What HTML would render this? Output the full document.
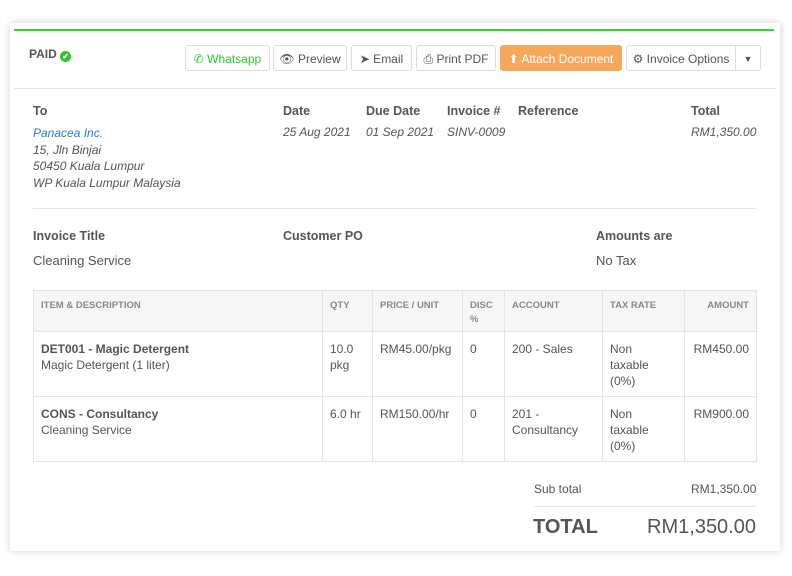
<!DOCTYPE html>
<html><head><style>
body{margin:0;width:792px;height:576px;background:#fff;font-family:"Liberation Sans",sans-serif;color:#555;position:relative;overflow:hidden}
.card{position:absolute;left:10px;top:23px;width:770px;height:528px;background:#fff;box-shadow:0 0 8px rgba(0,0,0,.18)}
.a{position:absolute;white-space:nowrap}
.btn{position:absolute;top:45px;height:26px;border:1px solid #ddd;border-radius:3px;background:#fff;font-size:12px;line-height:26px;text-align:center;color:#555;box-sizing:border-box}
.b{font-weight:bold;font-size:12.5px;color:#555}
.i{font-style:italic;font-size:12px;color:#555}
table{position:absolute;left:33px;top:290px;width:723px;border-collapse:collapse;table-layout:fixed;font-size:12px;color:#555}
td,th{border:1px solid #e3e3e3;vertical-align:top;padding:0 7px;text-align:left;line-height:16px;overflow:hidden}
th{background:#f6f6f6;font-size:9.5px;color:#888;font-weight:bold;height:41px;padding-top:8px;box-sizing:border-box;line-height:14px}
td{padding-top:9px;height:65px;box-sizing:border-box}
</style></head><body>
<div class="card"></div>
<div class="a" style="left:14px;top:29px;width:760px;height:2px;background:#3ccf3c"></div>
<div class="a" style="left:14px;top:88px;width:762px;height:1px;background:#e5e5e5"></div>
<div class="a b" style="left:29px;top:47px;font-size:12px">PAID <span style="display:inline-block;width:11px;height:11px;border-radius:50%;background:#2ec52e;color:#fff;font-size:8px;line-height:11px;text-align:center;vertical-align:-1px">✔</span></div>
<div class="btn" style="left:185px;width:85px;color:#2ec52e">✆ Whatsapp</div>
<div class="btn" style="left:273px;width:74px">👁 Preview</div>
<div class="btn" style="left:351px;width:61px">➤ Email</div>
<div class="btn" style="left:416px;width:80px">⎙ Print PDF</div>
<div class="btn" style="left:500px;width:122px;background:#f6a85a;border-color:#f6a85a;color:#fff">⬆ Attach Document</div>
<div class="btn" style="left:626px;width:110px;border-radius:3px 0 0 3px">⚙ Invoice Options</div>
<div class="btn" style="left:735px;width:26px;border-radius:0 3px 3px 0;font-size:9px">▼</div>

<div class="a b" style="left:33px;top:104px">To</div>
<div class="a b" style="left:283px;top:104px">Date</div>
<div class="a b" style="left:366px;top:104px">Due Date</div>
<div class="a b" style="left:447px;top:104px">Invoice #</div>
<div class="a b" style="left:518px;top:104px">Reference</div>
<div class="a b" style="left:691px;top:104px">Total</div>
<div class="a i" style="left:33px;top:125px;line-height:16.5px"><span style="color:#2a7bd0">Panacea Inc.</span><br>15, Jln Binjai<br>50450 Kuala Lumpur<br>WP Kuala Lumpur Malaysia</div>
<div class="a i" style="left:283px;top:125px">25 Aug 2021</div>
<div class="a i" style="left:366px;top:125px">01 Sep 2021</div>
<div class="a i" style="left:447px;top:125px">SINV-0009</div>
<div class="a i" style="left:691px;top:125px">RM1,350.00</div>
<div class="a" style="left:33px;top:208px;width:723px;height:1px;background:#e5e5e5"></div>
<div class="a b" style="left:33px;top:229px">Invoice Title</div>
<div class="a b" style="left:283px;top:229px">Customer PO</div>
<div class="a b" style="left:596px;top:229px">Amounts are</div>
<div class="a" style="left:33px;top:253px;font-size:13px">Cleaning Service</div>
<div class="a" style="left:596px;top:253px;font-size:13px">No Tax</div>

<table>
<colgroup><col style="width:289px"><col style="width:50px"><col style="width:90px"><col style="width:42px"><col style="width:98px"><col style="width:82px"><col style="width:72px"></colgroup>
<tr><th>ITEM &amp; DESCRIPTION</th><th>QTY</th><th>PRICE / UNIT</th><th>DISC %</th><th>ACCOUNT</th><th>TAX RATE</th><th style="text-align:right">AMOUNT</th></tr>
<tr><td><b>DET001 - Magic Detergent</b><br>Magic Detergent (1 liter)</td><td>10.0<br>pkg</td><td>RM45.00/pkg</td><td>0</td><td>200 - Sales</td><td>Non<br>taxable<br>(0%)</td><td style="text-align:right">RM450.00</td></tr>
<tr><td><b>CONS - Consultancy</b><br>Cleaning Service</td><td style="white-space:nowrap">6.0 hr</td><td>RM150.00/hr</td><td>0</td><td>201 -<br>Consultancy</td><td>Non<br>taxable<br>(0%)</td><td style="text-align:right">RM900.00</td></tr>
</table>

<div class="a" style="left:534px;top:482px;font-size:12px">Sub total</div>
<div class="a" style="left:691px;top:482px;font-size:12px">RM1,350.00</div>
<div class="a" style="left:534px;top:506px;width:222px;height:1px;background:#e5e5e5"></div>
<div class="a" style="left:533px;top:516px;font-size:20px;font-weight:bold;color:#555">TOTAL</div>
<div class="a" style="right:36px;top:516px;font-size:20px;color:#555">RM1,350.00</div>
</body></html>
